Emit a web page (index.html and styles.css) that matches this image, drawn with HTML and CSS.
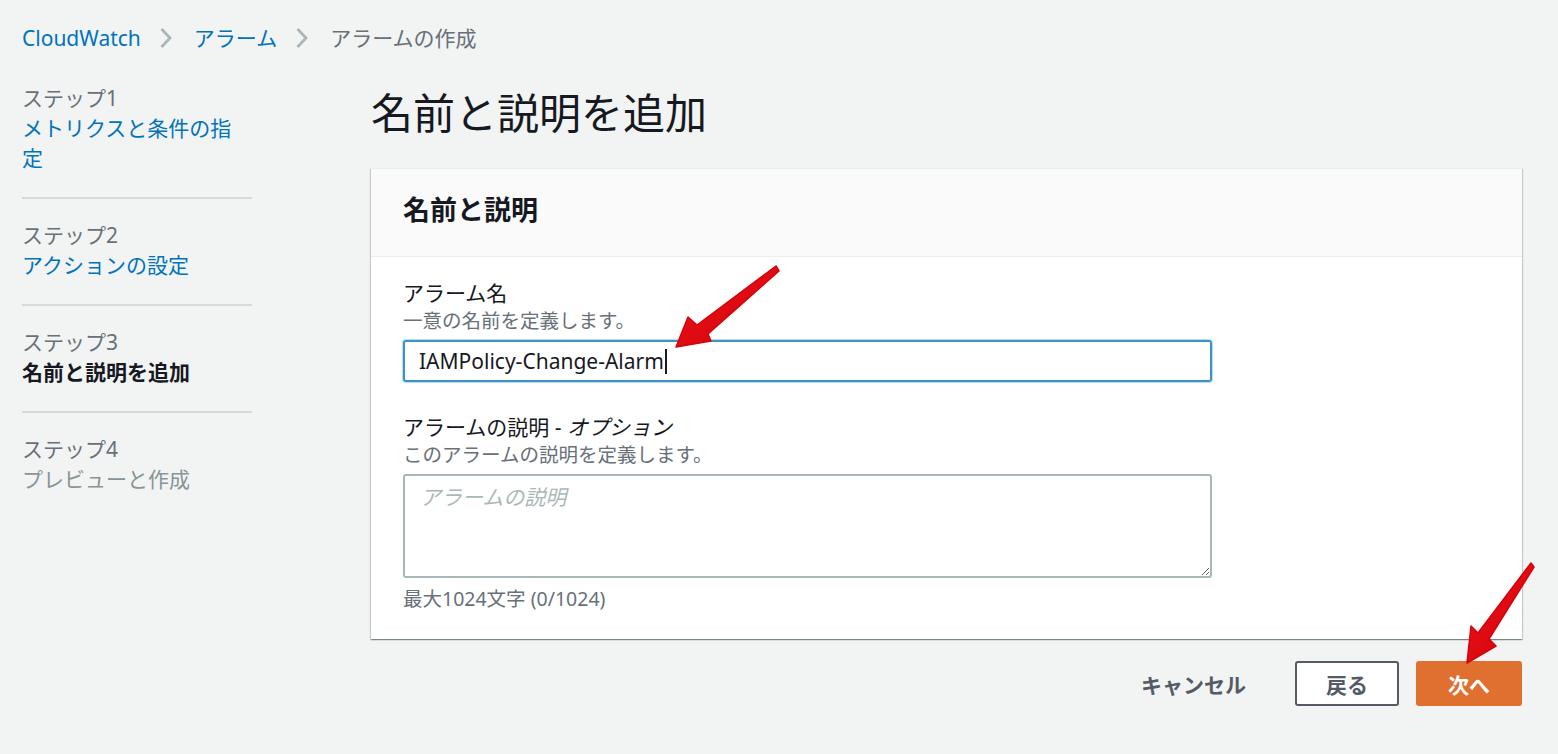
FILE: index.html
```html
<!DOCTYPE html>
<html lang="ja">
<head>
  <meta charset="utf-8">
  <meta name="viewport" content="width=device-width, initial-scale=1">
  <title>アラームの作成 | CloudWatch</title>
  <link rel="stylesheet" href="styles.css">
</head>
<body>
  <div class="page">
    <nav class="breadcrumb">
      <a href="#" class="crumb">CloudWatch</a>
      <svg class="chevron" width="14" height="22" viewBox="0 0 14 22"><path d="M2.5 2 L11 11 L2.5 20" fill="none" stroke="#aab7b8" stroke-width="2.8"/></svg>
      <a href="#" class="crumb">アラーム</a>
      <svg class="chevron" width="14" height="22" viewBox="0 0 14 22"><path d="M2.5 2 L11 11 L2.5 20" fill="none" stroke="#aab7b8" stroke-width="2.8"/></svg>
      <span class="crumb current">アラームの作成</span>
    </nav>

    <div class="layout">
      <ul class="steps">
        <li class="step">
          <div class="step-label">ステップ1</div>
          <a href="#" class="step-link">メトリクスと条件の指定</a>
        </li>
        <li class="step">
          <div class="step-label">ステップ2</div>
          <a href="#" class="step-link">アクションの設定</a>
        </li>
        <li class="step">
          <div class="step-label">ステップ3</div>
          <span class="step-link active">名前と説明を追加</span>
        </li>
        <li class="step">
          <div class="step-label">ステップ4</div>
          <span class="step-link disabled">プレビューと作成</span>
        </li>
      </ul>

      <main class="main">
        <h1 class="title">名前と説明を追加</h1>

        <section class="card">
          <div class="card-header">
            <h2>名前と説明</h2>
          </div>
          <div class="card-body">
            <div class="field">
              <div class="field-label">アラーム名</div>
              <div class="field-desc">一意の名前を定義します。</div>
              <div class="text-input focused">IAMPolicy-Change-Alarm<span class="caret"></span></div>
            </div>
            <div class="field">
              <div class="field-label">アラームの説明 - <i>オプション</i></div>
              <div class="field-desc">このアラームの説明を定義します。</div>
              <textarea class="text-area" placeholder="アラームの説明"></textarea>
              <div class="field-desc constraint">最大1024文字 (0/1024)</div>
            </div>
          </div>
        </section>

        <div class="actions">
          <button class="btn btn-link">キャンセル</button>
          <button class="btn btn-normal">戻る</button>
          <button class="btn btn-primary">次へ</button>
        </div>
      </main>
    </div>
  </div>

  <svg class="annotations" width="1558" height="754" viewBox="0 0 1558 754">
    <defs>
      <linearGradient id="red" x1="0" y1="0" x2="1" y2="1">
        <stop offset="0" stop-color="#f4161c"/>
        <stop offset="1" stop-color="#c90008"/>
      </linearGradient>
    </defs>
    <polygon points="776,266 779,271 708,334 711,341 676,347 688,317 697,325" fill="url(#red)" stroke="#d8000a" stroke-width="1.5" stroke-linejoin="round"/>
    <polygon points="1531,563 1534,567 1489,639 1496,646 1467,663 1471,626 1478,633" fill="url(#red)" stroke="#d8000a" stroke-width="1.5" stroke-linejoin="round"/>
  </svg>
</body>
</html>
```

FILE: styles.css
```css
body {
  background-color: #f2f3f3;
  color: #16191f;
  font-family: "Noto Sans", "Noto Sans CJK JP", sans-serif;
  font-size: 21px;
  line-height: 30px;
  margin: 0;
  padding: 0;
}
.page {
  padding: 23px 36px 0 22px;
}
.breadcrumb {
  display: flex;
  align-items: center;
  height: 30px;
}
.crumb {
  color: #0073bb;
  text-decoration: none;
}
.crumb.current {
  color: #687078;
}
.chevron {
  margin: 0 21px 0 18px;
}
.layout {
  display: flex;
  margin-top: 30px;
}
.steps {
  list-style: none;
  margin: 0 119px 0 0;
  padding: 0;
  width: 230px;
  flex-shrink: 0;
}
.step {
  padding-bottom: 24px;
  border-bottom: 2px solid #d5dbdb;
  margin-bottom: 21px;
}
.step:last-child {
  border-bottom: none;
}
.step-label {
  color: #687078;
}
.step-link {
  color: #0073bb;
  text-decoration: none;
}
.step-link.active {
  color: #16191f;
  font-weight: bold;
}
.step-link.disabled {
  color: #879596;
}
.main {
  flex: 1;
}
.title {
  font-size: 42px;
  font-weight: normal;
  line-height: 54px;
  margin: 3px 0 28px 0;
}
.card {
  background-color: #fff;
  border-top: 1px solid #eaeded;
  box-shadow: 0 1px 1px 0 rgba(0, 28, 36, 0.3), 1px 1px 1px 0 rgba(0, 28, 36, 0.15), -1px 1px 1px 0 rgba(0, 28, 36, 0.15);
}
.card-header {
  background-color: #fafafa;
  border-bottom: 1px solid #eaeded;
  padding: 23px 32px 28px;
}
.card-header h2 {
  font-size: 27px;
  line-height: 36px;
  margin: 0;
}
.card-body {
  padding: 21px 32px 27px;
}
.field + .field {
  margin-top: 30px;
}
.field-desc {
  color: #687078;
  font-size: 19.5px;
  line-height: 26px;
}
.field-label i {
  font-style: italic;
}
.text-input {
  box-sizing: border-box;
  width: 809px;
  height: 42px;
  margin-top: 6px;
  border: 2px solid #aab7b8;
  border-radius: 3px;
  padding: 0 14px;
  display: flex;
  align-items: center;
  font-size: 21px;
}
.text-input.focused {
  border-color: #3a93c1;
  box-shadow: 0 0 1px 1px rgba(58, 147, 193, 0.35);
}
.caret {
  display: inline-block;
  width: 2px;
  height: 25px;
  margin-left: 1px;
  background-color: #16191f;
}
.text-area {
  display: block;
  box-sizing: border-box;
  width: 809px;
  height: 104px;
  margin-top: 6px;
  border: 2px solid #aab7b8;
  border-radius: 3px;
  padding: 6px 15px;
  font-family: "Noto Sans", "Noto Sans CJK JP", sans-serif;
  font-size: 21px;
  line-height: 30px;
  resize: both;
}
.text-area::placeholder {
  color: #aab7b8;
  font-style: italic;
}
.constraint {
  margin-top: 8px;
}
.actions {
  display: flex;
  justify-content: flex-end;
  gap: 17px;
  margin-top: 22px;
}
.btn {
  box-sizing: border-box;
  height: 45px;
  padding: 0 29px;
  border: 2px solid transparent;
  border-radius: 3px;
  font-family: "Noto Sans", "Noto Sans CJK JP", sans-serif;
  font-size: 21px;
  font-weight: bold;
  color: #545b64;
  background: none;
  cursor: pointer;
}
.btn-link {
  padding: 0 30px;
}
.btn-normal {
  background-color: #fff;
  border-color: #545b64;
}
.btn-primary {
  background-color: #e07030;
  border-color: #e07030;
  color: #fff;
  padding: 0 30px;
}
.annotations {
  position: absolute;
  left: 0;
  top: 0;
  pointer-events: none;
}
```
